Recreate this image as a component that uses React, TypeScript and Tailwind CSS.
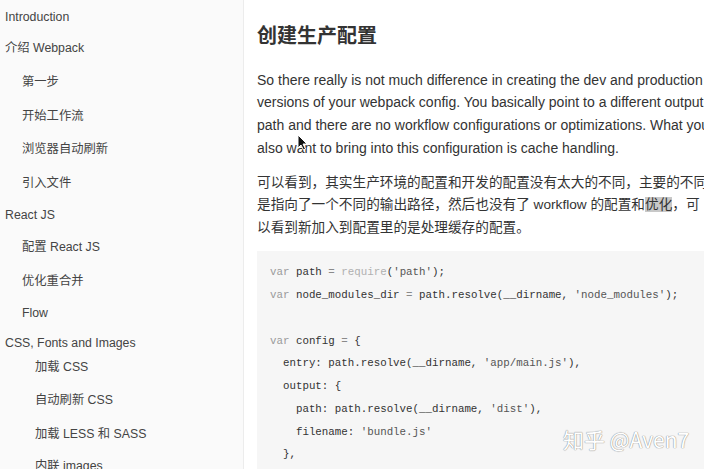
import React from "react";

type NavItem = { label: string; indent: string; gap: string };

const nav: NavItem[] = [
  { label: "Introduction", indent: "pl-[5px]", gap: "mt-[7px]" },
  { label: "介绍 Webpack", indent: "pl-[5px]", gap: "mt-[11px]" },
  { label: "第一步", indent: "pl-[22px]", gap: "mt-[14px]" },
  { label: "开始工作流", indent: "pl-[22px]", gap: "mt-[14px]" },
  { label: "浏览器自动刷新", indent: "pl-[22px]", gap: "mt-[13px]" },
  { label: "引入文件", indent: "pl-[22px]", gap: "mt-[14px]" },
  { label: "React JS", indent: "pl-[5px]", gap: "mt-[12px]" },
  { label: "配置 React JS", indent: "pl-[22px]", gap: "mt-[12px]" },
  { label: "优化重合并", indent: "pl-[22px]", gap: "mt-[14px]" },
  { label: "Flow", indent: "pl-[22px]", gap: "mt-[12px]" },
  { label: "CSS, Fonts and Images", indent: "pl-[5px]", gap: "mt-[10px]" },
  { label: "加载 CSS", indent: "pl-[35px]", gap: "mt-[4px]" },
  { label: "自动刷新 CSS", indent: "pl-[35px]", gap: "mt-[13px]" },
  { label: "加载 LESS 和 SASS", indent: "pl-[35px]", gap: "mt-[14px]" },
  { label: "内联 images", indent: "pl-[35px]", gap: "mt-[12px]" },
];

// token colours for the code sample
const K = "text-[#9a9a9a]"; // keyword
const F = "text-[#b0b0b0]"; // builtin call
const S = "text-[#555]"; // string
const P = "text-[#8a8a8a]"; // operator
const I = "text-[#333]"; // identifier

type Tok = [string, string];

const code: Tok[][] = [
  [["var", K], [" path ", I], ["=", P], [" ", I], ["require", F], ["(", I], ["'path'", S], [");", I]],
  [["var", K], [" node_modules_dir ", I], ["=", P], [" path.resolve(__dirname, ", I], ["'node_modules'", S], [");", I]],
  [],
  [["var", K], [" config ", I], ["=", P], [" {", I]],
  [["  entry: path.resolve(__dirname, ", I], ["'app/main.js'", S], ["),", I]],
  [["  output: {", I]],
  [["    path: path.resolve(__dirname, ", I], ["'dist'", S], ["),", I]],
  [["    filename: ", I], ["'bundle.js'", S]],
  [["  },", I]],
];

export default function App() {
  return (
    <div className="relative flex h-[469px] w-[704px] overflow-hidden bg-white font-['Liberation_Sans','Noto_Sans_CJK_SC',sans-serif] text-[#333]">
      {/* sidebar */}
      <aside className="flex w-[244px] shrink-0 flex-col border-r border-[#ececec] bg-[#fafafa]">
        {nav.map((n) => (
          <div key={n.label} className={`${n.indent} ${n.gap} h-[20px] shrink-0 text-[12.3px] leading-[20px] whitespace-nowrap text-[#444]`}>
            {n.label}
          </div>
        ))}
      </aside>

      {/* content */}
      <main className="w-[466px] shrink-0 pl-[13px]">
        <h1 className="mt-[22px] h-[28px] text-[20px] leading-[28px] font-bold text-[#333]">创建生产配置</h1>

        <p className="mt-[18.5px] text-[14px] leading-[22.75px]">
          So there really is not much difference in creating the dev and production versions of your webpack config. You basically point to a different output path and there are no workflow configurations or optimizations. What you also want to bring into this configuration is cache handling.
        </p>

        <p className="mt-[12px] text-[13.65px] leading-[22.75px]">
          可以看到，其实生产环境的配置和开发的配置没有太大的不同，主要的不同是指向了一个不同的输出路径，然后也没有了 workflow 的配置和
          <span className="bg-[#c8c8c8]">优化</span>
          ，可以看到新加入到配置里的是处理缓存的配置。
        </p>

        <pre className="mt-[11px] w-[520px] bg-[#f6f6f6] pt-[10.5px] pb-[12px] pl-[13px] font-['Liberation_Mono',monospace] text-[10.8px] leading-[22.75px]">
          {code.map((line, i) => (
            <div key={i} className="h-[22.75px]">
              {line.map(([t, c], j) => (
                <span key={j} className={c}>
                  {t}
                </span>
              ))}
            </div>
          ))}
        </pre>
      </main>

      {/* watermark */}
      <div className="absolute top-[426px] left-[563px] font-['Noto_Sans_CJK_SC','Liberation_Sans',sans-serif] text-[21px] leading-[26px] whitespace-nowrap text-white [text-shadow:0_0_1px_#8a8a8a,0_0_1px_#8a8a8a]">
        知乎 @Aven7
      </div>

      {/* mouse pointer */}
      <svg className="absolute top-[134px] left-[297px]" width="11" height="17" viewBox="0 0 11 17">
        <path d="M1 1 L1 14 L4 11 L6.5 16 L8.5 15 L6 10 L10 10 Z" fill="#111" stroke="#fff" strokeWidth="1" strokeLinejoin="round" />
      </svg>
    </div>
  );
}
